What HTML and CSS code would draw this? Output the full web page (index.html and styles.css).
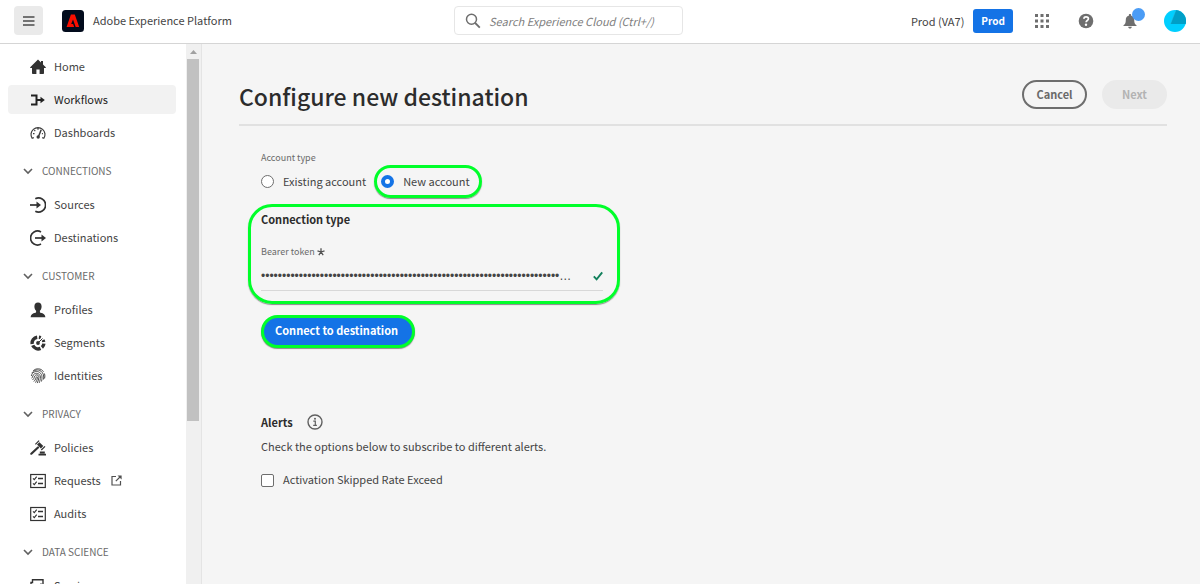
FILE: index.html
```html
<!DOCTYPE html>
<html lang="en">
<head>
    <meta charset="utf-8">
    <meta name="viewport" content="width=device-width, initial-scale=1">
    <title>Adobe Experience Platform</title>
    <link rel="stylesheet" href="styles.css">
</head>
<body>
    <header class="topbar">
        <div class="topbar-left">
            <button class="menu-button" type="button" aria-label="Menu">
                <svg width="12" height="10" viewBox="0 0 12 10"><path d="M0 1h11.500M0 5h11.500M0 9h11.500" stroke="#4b4b4b" stroke-width="1.600"/></svg>
            </button>
            <a class="brand" href="#">
                <svg width="22" height="22" viewBox="0 0 22 22">
                    <rect width="22" height="22" rx="3.500" fill="#020b1c"/>
                    <path d="M8.900 4.500h3.900L17.200 17h-3.500l-2.700-7.400-1.800 4.400h1.900l1.100 3H4.600z" fill="#fa0f00"/>
                </svg>
                <span>Adobe Experience Platform</span>
            </a>
        </div>
        <label class="search">
            <svg width="16" height="16" viewBox="0 0 16 16" fill="none" stroke="#6e6e6e"><circle cx="6.500" cy="6.300" r="5" stroke-width="1.500"/><path d="M10.200 10l4.600 4.600" stroke-width="1.800"/></svg>
            <input type="search" placeholder="Search Experience Cloud (Ctrl+/)" aria-label="Search Experience Cloud">
        </label>
        <div class="topbar-right">
            <span>Prod (VA7)</span>
            <button class="env-button" type="button">Prod</button>
            <button class="icon-button" type="button" aria-label="Apps">
                <svg width="16" height="16" viewBox="0 0 16 16" fill="#6e6e6e"><path d="M1 1h3v3H1zM6.500 1h3v3h-3zM12 1h3v3h-3zM1 6.500h3v3H1zM6.500 6.500h3v3h-3zM12 6.500h3v3h-3zM1 12h3v3H1zM6.500 12h3v3h-3zM12 12h3v3h-3z"/></svg>
            </button>
            <button class="icon-button" type="button" aria-label="Help">
                <svg width="16" height="16" viewBox="0 0 16 16"><circle cx="8" cy="8" r="7.300" fill="#6e6e6e"/><path d="M5.700 5.700C6 4.300 7 3.900 8 3.900c1.500 0 2.400.800 2.400 1.900 0 1.700-2.300 1.700-2.300 3.500" fill="none" stroke="#fff" stroke-width="1.700"/><circle cx="8" cy="11.800" r="1.200" fill="#fff"/></svg>
            </button>
            <button class="icon-button bell" type="button" aria-label="Notifications">
                <svg width="16" height="16" viewBox="0 0 16 16" fill="#6e6e6e"><path d="M8 1c-.700 0-1.200.500-1.200 1.200v.500C4.600 3.200 3.800 5 3.800 7c0 3.200-.800 4.200-2.300 5.300V13h13v-.700C13 11.200 12.200 10.200 12.200 7c0-2-.800-3.800-3-4.300v-.500C9.200 1.500 8.700 1 8 1zM6.200 13.700h3.600c0 1-.800 1.800-1.800 1.800s-1.800-.800-1.800-1.800z"/></svg>
                <span class="bell-dot"></span>
            </button>
            <button class="icon-button avatar" type="button" aria-label="Account">
                <svg width="22" height="22" viewBox="0 0 22 22"><circle cx="11" cy="11" r="11" fill="#00cfff"/><path d="M12 .050A11 11 0 0 1 21.700 14H6.500z" fill="#009fc7"/><path d="M6.500 14L12 .050" stroke="#33bfe0" stroke-width=".400"/></svg>
            </button>
        </div>
    </header>

    <div class="layout">
        <nav class="sidebar" aria-label="Main">
            <ul class="nav-list">
                <li><a class="nav-item" href="#">
                    <svg width="16" height="16" viewBox="0 0 16 16" fill="#323232"><path d="M8 .500L.200 8.300c-.300.300-.100.700.300.700H2v5.200c0 .400.300.800.800.800H6.400v-4.500h3.200V15h3.600c.500 0 .800-.400.800-.800V9h1.500c.400 0 .600-.400.300-.700L13 5.600V2h-2v1.600z"/></svg>
                    <span>Home</span></a></li>
                <li><a class="nav-item active" href="#">
                    <svg width="16" height="16" viewBox="0 0 16 16" fill="none" stroke="#222" stroke-width="2"><path d="M1 3.500H6.500v9H1M6.500 8H12"/><path d="M10.500 4.700L14.800 8l-4.300 3.300z" fill="#222" stroke="none"/></svg>
                    <span>Workflows</span></a></li>
                <li><a class="nav-item" href="#">
                    <svg width="16" height="16" viewBox="0 0 16 16" fill="none" stroke="#3c3c3c" stroke-width="1.200"><path d="M2.200 13.500A7 7 0 1 1 13.800 13.500M2.300 13.500l1.500-.900M13.700 13.500l-1.500-.900M3 8.700h1.500M4.300 5.200l1 1M8 3.300v1.500M12.900 8.700h-1"/><path d="M11.200 4.700L8.500 11.500" stroke-width="1.500"/><circle cx="8.200" cy="12" r="1.700" fill="#3c3c3c" stroke="none"/></svg>
                    <span>Dashboards</span></a></li>
            </ul>

            <button class="nav-heading" type="button"><svg width="10" height="10" viewBox="0 0 10 10"><path d="M1 3l4 4 4-4"/></svg>CONNECTIONS</button>
            <ul class="nav-list">
                <li><a class="nav-item" href="#">
                    <svg width="16" height="16" viewBox="0 0 16 16" fill="none" stroke="#323232" stroke-width="1.700"><path d="M5.300 1.800A7 7 0 1 1 5.300 14.200"/><path d="M0 8h8"/><path d="M6.500 4.400L11 8l-4.500 3.600z" fill="#323232" stroke="none"/></svg>
                    <span>Sources</span></a></li>
                <li><a class="nav-item" href="#">
                    <svg width="16" height="16" viewBox="0 0 16 16" fill="none" stroke="#323232" stroke-width="1.700"><path d="M11 1.900A7 7 0 1 0 11 14.100"/><path d="M5 8h8"/><path d="M11.500 4.400L16 8l-4.500 3.600z" fill="#323232" stroke="none"/></svg>
                    <span>Destinations</span></a></li>
            </ul>

            <button class="nav-heading" type="button"><svg width="10" height="10" viewBox="0 0 10 10"><path d="M1 3l4 4 4-4"/></svg>CUSTOMER</button>
            <ul class="nav-list">
                <li><a class="nav-item" href="#">
                    <svg width="16" height="16" viewBox="0 0 16 16" fill="#323232"><path d="M8 .500c2.300 0 3.600 1.600 3.600 3.900 0 1.700-.700 3.300-1.700 4.300v1.400c0 .400.200.600.600.700 3 .600 4.700 1.700 4.900 4.400H.600c.200-2.700 1.900-3.800 4.900-4.400.400-.100.600-.300.600-.700V8.700c-1-1-1.700-2.600-1.700-4.300C4.400 2.100 5.700.500 8 .500z"/></svg>
                    <span>Profiles</span></a></li>
                <li><a class="nav-item" href="#">
                    <svg width="16" height="16" viewBox="0 0 16 16" fill="none" stroke="#323232"><path d="M7.200 2.200A5.900 5.900 0 0 0 2.200 9M2.700 10.400A5.900 5.900 0 0 0 10.500 13.400M11.900 12.400A5.900 5.900 0 0 0 13.900 8.600" stroke-width="3.400"/><path d="M8.900 2.200A5.900 5.900 0 0 1 10.700 2.800M13 5A5.900 5.900 0 0 1 13.800 7" stroke-width="3.200"/><circle cx="8" cy="8" r="1.900" fill="#323232" stroke="none"/><path d="M8 8l4.500-4.500" stroke-width="1"/></svg>
                    <span>Segments</span></a></li>
                <li><a class="nav-item" href="#">
                    <svg width="16" height="16" viewBox="0 0 16 16" fill="none" stroke="#3c3c3c" stroke-width=".900"><path d="M3.200 2.700C6-.100 11.500.200 13.500 3.800M1.800 5.200C3.700 1.800 8.200 1 11 3.200c2.600 2 3.100 5 2.500 8.300M1.300 8C2 4.300 5.700 2.600 8.700 3.900c3.300 1.500 3.900 5 2.800 9.600M1.700 10.300C3 9 2.500 6.900 4.600 5.800c2.600-1.400 5.700.400 5.800 3.200.1 2-.500 3.900-1.200 5.900M2.500 12c2.200-1.600 1.600-4.200 3.300-5 1.600-.700 3.200.600 3.100 2.300-.1 2-.700 3.900-1.700 5.800M3.800 13.500c2-1.800 2-3.600 2.500-4.500.400-.700 1.300-.400 1.200.500-.200 2-.900 3.600-2 5.100M14.500 5.500c.500 1.500.500 3.500.1 5"/></svg>
                    <span>Identities</span></a></li>
            </ul>

            <button class="nav-heading" type="button"><svg width="10" height="10" viewBox="0 0 10 10"><path d="M1 3l4 4 4-4"/></svg>PRIVACY</button>
            <ul class="nav-list">
                <li><a class="nav-item" href="#">
                    <svg width="16" height="16" viewBox="0 0 16 16" fill="none" stroke="#323232"><path d="M1.300 13.700L8 7.500" stroke-width="2.200" stroke-linecap="round"/><path d="M7 4.600l3.900 3.900 2.400-2.400-3.900-3.900z" fill="#323232" stroke="none"/><path d="M5.400 4.300l3.700-3.700M11.300 10l3.700-3.700" stroke-width="1.200"/><path d="M8.500 14.600h7.500M9.800 12.500h5" stroke-width="1.800"/></svg>
                    <span>Policies</span></a></li>
                <li><a class="nav-item" href="#">
                    <svg width="16" height="16" viewBox="0 0 16 16" fill="none" stroke="#323232"><rect x=".700" y="1.500" width="14.600" height="13" stroke-width="1.200"/><path d="M8 5.500h5M8 10.500h5" stroke-width="1.700"/><path d="M3 5.300l1.300 1.300L6.700 3.700M3 10.300l1.300 1.300 2.400-2.900" stroke-width="1.100"/></svg>
                    <span>Requests</span>
                    <svg class="external" width="11" height="11" viewBox="0 0 11 11" fill="none" stroke="#505050" stroke-width="1.200"><path d="M5 1.500H1v8.500h8.500V6M4.800 6.200L9 2"/><path d="M6.500.400h4.100v4.100z" fill="#505050" stroke="none"/></svg></a></li>
                <li><a class="nav-item" href="#">
                    <svg width="16" height="16" viewBox="0 0 16 16" fill="none" stroke="#323232"><rect x=".700" y="1.500" width="14.600" height="13" stroke-width="1.200"/><path d="M8 5.500h5M8 10.500h5" stroke-width="1.700"/><path d="M3 5.300l1.300 1.300L6.700 3.700M3 10.300l1.300 1.300 2.400-2.900" stroke-width="1.100"/></svg>
                    <span>Audits</span></a></li>
            </ul>

            <button class="nav-heading" type="button"><svg width="10" height="10" viewBox="0 0 10 10"><path d="M1 3l4 4 4-4"/></svg>DATA SCIENCE</button>
            <ul class="nav-list">
                <li><a class="nav-item" href="#">
                    <svg width="16" height="16" viewBox="0 0 16 16" fill="none" stroke="#323232" stroke-width="1.400"><path d="M5 14H1V4.500h1.500V1.700h10.500V8"/><path d="M9 7.500l2-2.500 2 2.500z" fill="#323232" stroke="none"/></svg>
                    <span>Services</span></a></li>
            </ul>
        </nav>
        <div class="scrollbar">
            <svg class="scroll-up" width="15" height="15" viewBox="0 0 15 15"><path d="M4 10l3.500-4L11 10z" fill="#a0a0a0"/></svg>
            <div class="scroll-thumb"></div>
        </div>

        <main class="content">
            <div class="page-header">
                <h1>Configure new destination</h1>
                <div class="page-actions">
                    <button class="pill-button" type="button">Cancel</button>
                    <button class="pill-button" type="button" disabled>Next</button>
                </div>
            </div>

            <form class="setup-form">
                <fieldset class="account-type">
                    <legend>Account type</legend>
                    <div class="radio-row">
                        <label class="choice"><input type="radio" name="account"><span>Existing account</span></label>
                        <label class="choice highlight"><input type="radio" name="account" checked><span>New account</span></label>
                    </div>
                </fieldset>

                <section class="connection highlight">
                    <h2>Connection type</h2>
                    <label class="field-label" for="token">Bearer token
                        <svg width="8" height="8" viewBox="0 0 8 8"><path d="M4 4V.300M4 4L.500 2.900M4 4l3.500-1.100M4 4L1.800 7.200M4 4l2.200 3.200" stroke="#505050" stroke-width="1.300"/></svg>
                    </label>
                    <div class="token-field">
                        <input id="token" type="password" autocomplete="off" value="0123456789012345678901234567890123456789012345678901234567890123456789012345678901234567890123456789">
                        <svg width="10" height="10" viewBox="0 0 10 10"><path d="M.800 5.300l2.800 3L9.200 1.300" fill="none" stroke="#12805c" stroke-width="1.900"/></svg>
                    </div>
                </section>

                <button class="connect-button highlight" type="button">Connect to destination</button>

                <section class="alerts">
                    <div class="alerts-title">
                        <h2>Alerts</h2>
                        <button class="icon-button" type="button" aria-label="About alerts">
                            <svg width="16" height="16" viewBox="0 0 16 16"><circle cx="8" cy="8" r="7" fill="none" stroke="#606060" stroke-width="1.400"/><circle cx="8" cy="4.700" r="1" fill="#606060"/><path d="M6.300 7.100h2v4M6.200 11.400h3.700" fill="none" stroke="#606060" stroke-width="1.200"/></svg>
                        </button>
                    </div>
                    <p>Check the options below to subscribe to different alerts.</p>
                    <label class="choice"><input type="checkbox"><span>Activation Skipped Rate Exceed</span></label>
                </section>
            </form>
        </main>
    </div>
</body>
</html>
```

FILE: styles.css
```css
:root {
    --text: #444;
    --text-strong: #2c2c2c;
    --text-muted: #6a6a6a;
    --page-bg: #f5f5f5;
    --blue: #1473e6;
    --highlight: #00ff2a;
    --line: #e1e1e1;
}

* {
    box-sizing: border-box;
}

body {
    display: flex;
    flex-direction: column;
    height: 100vh;
    margin: 0;
    overflow: hidden;
    background: var(--page-bg);
    color: var(--text);
    font-family: "Noto Sans CJK SC", "Open Sans", sans-serif;
    font-size: 11px;
    line-height: 18px;
}

button, input {
    font: inherit;
    color: inherit;
}

button {
    padding: 0;
    border: none;
    background: none;
    cursor: pointer;
}

a {
    color: inherit;
    text-decoration: none;
}

svg {
    flex: none;
    display: block;
}

h1, h2, p, ul, fieldset, legend {
    margin: 0;
    padding: 0;
    border: none;
}

/* Top bar */
.topbar {
    flex: none;
    display: grid;
    grid-template-columns: 7fr 229px 8fr;
    align-items: center;
    height: 44px;
    padding: 0 14px 2px;
    background: #fff;
    border-bottom: 1px solid #d5d5d5;
}

.topbar-left, .topbar-right, .brand {
    display: flex;
    align-items: center;
}

.topbar-left {
    gap: 19px;
}

.brand {
    gap: 9px;
}

.menu-button {
    display: grid;
    place-items: center;
    width: 29px;
    height: 29px;
    border-radius: 4px;
    background: #eaeaea;
}

.search {
    display: flex;
    align-items: center;
    gap: 8px;
    height: 29px;
    padding: 0 10px;
    border: 1px solid #e6e6e6;
    border-radius: 4px;
}

.search input {
    flex: 1;
    min-width: 0;
    padding: 0;
    border: none;
    outline: none;
    background: none;
    font-style: italic;
}

.search input::placeholder {
    color: #808080;
}

.topbar-right {
    justify-content: flex-end;
}

.env-button {
    height: 24px;
    margin: 0 14px 0 9px;
    padding: 0 8px;
    border-radius: 3px;
    background: var(--blue);
    color: #fff;
    font-size: 10px;
    font-weight: 700;
}

.icon-button {
    display: grid;
    place-items: center;
}

.topbar-right .icon-button {
    width: 30px;
    height: 30px;
    margin-right: 14px;
}

.bell {
    position: relative;
}

.bell-dot {
    position: absolute;
    top: 2px;
    right: 0;
    width: 13px;
    height: 13px;
    border-radius: 50%;
    background: #4b9cf5;
}

.topbar-right .avatar {
    width: 22px;
    margin: 0 0 0 5px;
}

/* Side navigation */
.layout {
    flex: 1;
    display: flex;
    min-height: 0;
}

.sidebar {
    flex: none;
    width: 186px;
    padding: 8px 10px 0 8px;
    overflow: hidden;
    background: #fff;
}

.nav-list {
    display: flex;
    flex-direction: column;
    gap: 4px;
    list-style: none;
}

.nav-item {
    display: flex;
    align-items: center;
    gap: 8px;
    height: 29px;
    padding-left: 22px;
    border-radius: 4px;
}

.nav-item span, .choice span, .brand span {
    padding-bottom: 2px;
}

.nav-item.active {
    background: #f2f2f2;
    color: #222;
}

.external {
    margin-left: 2px;
}

.nav-heading {
    display: flex;
    align-items: center;
    gap: 9px;
    height: 29px;
    margin: 10px 0 4px;
    padding: 0 0 2px 15px;
    color: var(--text-muted);
    font-size: 10px;
}

.nav-heading path {
    fill: none;
    stroke: #606060;
    stroke-width: 1.6;
}

.scrollbar {
    flex: none;
    display: flex;
    flex-direction: column;
    width: 16px;
    background: #f0f0f0;
    border-right: 1px solid #e4e4e4;
}

.scroll-thumb {
    height: 67%;
    margin: 0 2px 0 1px;
    background: #c1c1c1;
}

/* Page */
.content {
    flex: 1;
    min-width: 0;
    padding: 36px 33px 0 37px;
}

.page-header {
    display: flex;
    justify-content: space-between;
    align-items: flex-start;
    height: 46px;
    border-bottom: 2px solid var(--line);
}

h1 {
    color: var(--text-strong);
    font-size: 23px;
    font-weight: 500;
    line-height: 32px;
}

.page-actions {
    display: flex;
    gap: 15px;
}

.pill-button {
    height: 29px;
    min-width: 65px;
    padding: 0 12px 2px;
    border: 2px solid #6e6e6e;
    border-radius: 15px;
    color: var(--text-muted);
    font-weight: 700;
}

.pill-button:disabled {
    border-color: #eaeaea;
    background: #eaeaea;
    color: #b3b3b3;
}

.setup-form {
    padding: 25px 22px 0;
}

legend, .field-label {
    color: var(--text-muted);
    font-size: 9px;
}

legend {
    line-height: 14px;
}

.radio-row {
    display: flex;
    align-items: center;
    height: 33px;
    gap: 8px;
}

.choice {
    display: flex;
    align-items: center;
    gap: 9px;
}

.choice input {
    appearance: none;
    width: 13px;
    height: 13px;
    margin: 0;
    border: 1px solid #6e6e6e;
    border-radius: 2px;
    background: #fff;
}

.choice input[type="radio"] {
    border-radius: 50%;
}

.choice input[type="radio"]:checked {
    border: 4px solid var(--blue);
}

.highlight {
    border: 3px solid var(--highlight);
    box-shadow: 0 1px 1px #8a8a8a;
}

.choice.highlight {
    height: 33px;
    padding: 0 9px 0 4px;
    border-radius: 17px;
}

.connection {
    width: 372px;
    max-width: 100%;
    margin: 6px 0 11px -13px;
    padding: 3px 14px 10px 10px;
    border-radius: 24px;
}

h2 {
    color: var(--text-strong);
    font-size: 11px;
    font-weight: 700;
    line-height: 18px;
}

.field-label {
    display: flex;
    align-items: center;
    gap: 2px;
    margin-top: 15px;
}

.token-field {
    display: flex;
    align-items: center;
    justify-content: space-between;
    height: 30px;
    border-bottom: 1px solid #d8d8d8;
}

.token-field input {
    width: 314px;
    padding: 0;
    border: none;
    outline: none;
    background: none;
    font-family: "Liberation Sans", Arial, sans-serif;
    font-size: 12px;
    text-overflow: ellipsis;
}

.connect-button {
    height: 33px;
    padding: 0 14px 3px 11px;
    border-radius: 17px;
    background: var(--blue);
    color: #fff;
    font-weight: 700;
}

.alerts {
    margin-top: 65px;
}

.alerts-title {
    display: flex;
    align-items: center;
    gap: 14px;
    margin-bottom: 6px;
}

.alerts p {
    margin-bottom: 15px;
}
```
